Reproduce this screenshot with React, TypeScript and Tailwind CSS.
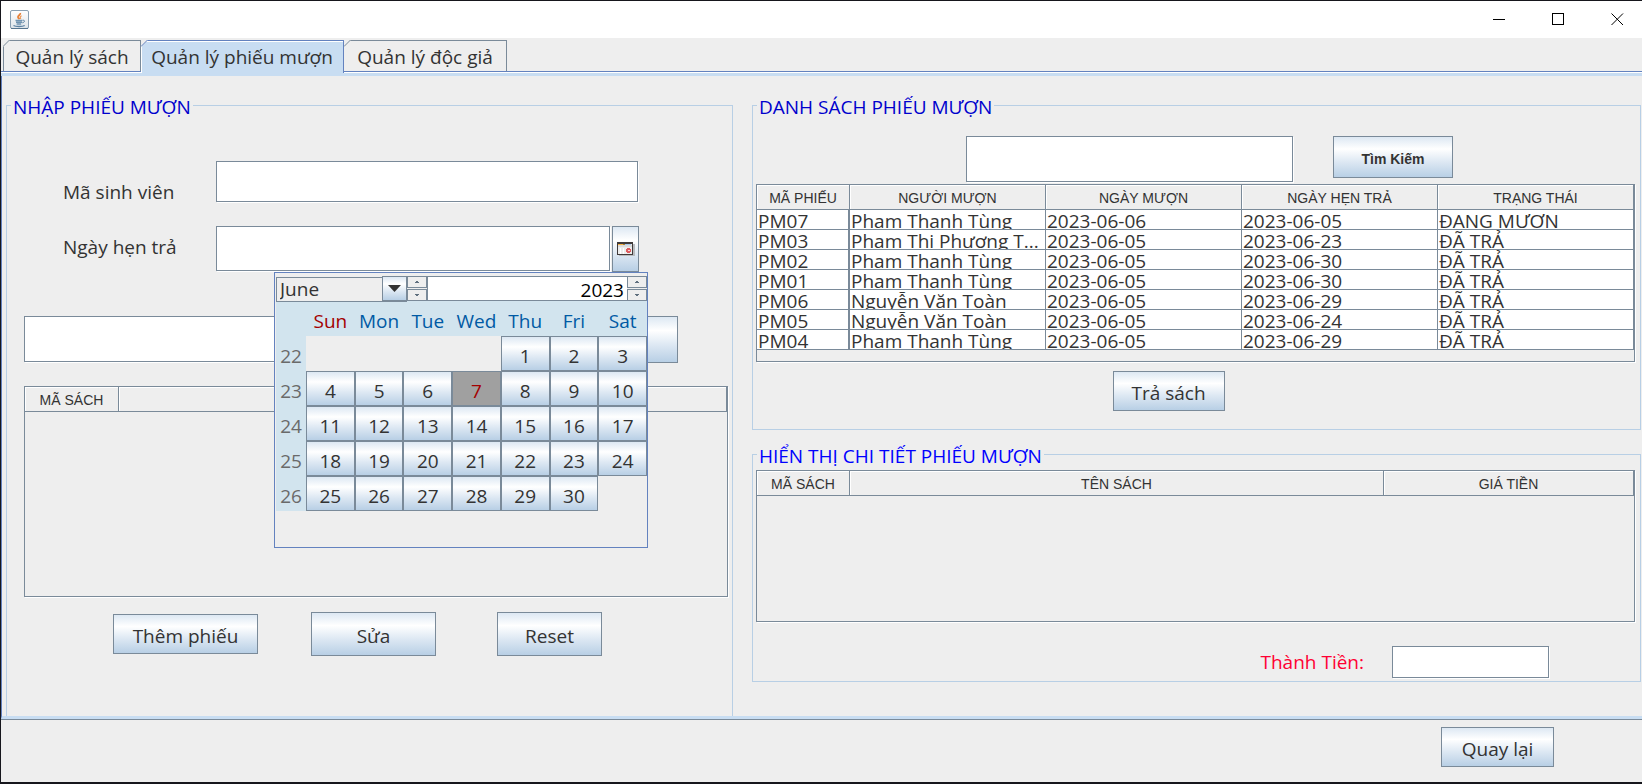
import { useState } from "react";

type Phieu = {
  id: string;
  nguoiMuon: string;
  ngayMuon: string;
  ngayHenTra: string;
  trangThai: string;
};

const tabs = [
  { name: "Quản lý sách", width: "w-[138px]" },
  { name: "Quản lý phiếu mượn", width: "w-[203px]" },
  { name: "Quản lý độc giả", width: "w-[163px]" },
];

const dsPhieu: Phieu[] = [
  { id: "PM07", nguoiMuon: "Phạm Thanh Tùng", ngayMuon: "2023-06-06", ngayHenTra: "2023-06-05", trangThai: "ĐANG MƯỢN" },
  { id: "PM03", nguoiMuon: "Phạm Thị Phương T...", ngayMuon: "2023-06-05", ngayHenTra: "2023-06-23", trangThai: "ĐÃ TRẢ" },
  { id: "PM02", nguoiMuon: "Phạm Thanh Tùng", ngayMuon: "2023-06-05", ngayHenTra: "2023-06-30", trangThai: "ĐÃ TRẢ" },
  { id: "PM01", nguoiMuon: "Phạm Thanh Tùng", ngayMuon: "2023-06-05", ngayHenTra: "2023-06-30", trangThai: "ĐÃ TRẢ" },
  { id: "PM06", nguoiMuon: "Nguyễn Văn Toàn", ngayMuon: "2023-06-05", ngayHenTra: "2023-06-29", trangThai: "ĐÃ TRẢ" },
  { id: "PM05", nguoiMuon: "Nguyễn Văn Toàn", ngayMuon: "2023-06-05", ngayHenTra: "2023-06-24", trangThai: "ĐÃ TRẢ" },
  { id: "PM04", nguoiMuon: "Phạm Thanh Tùng", ngayMuon: "2023-06-05", ngayHenTra: "2023-06-29", trangThai: "ĐÃ TRẢ" },
];

const months = [
  "January", "February", "March", "April", "May", "June",
  "July", "August", "September", "October", "November", "December",
];

const weekDays = ["Sun", "Mon", "Tue", "Wed", "Thu", "Fri", "Sat"];

// 0 = empty cell
const weeks = [
  { no: 22, days: [0, 0, 0, 0, 1, 2, 3] },
  { no: 23, days: [4, 5, 6, 7, 8, 9, 10] },
  { no: 24, days: [11, 12, 13, 14, 15, 16, 17] },
  { no: 25, days: [18, 19, 20, 21, 22, 23, 24] },
  { no: 26, days: [25, 26, 27, 28, 29, 30, 0] },
];

const gradient =
  "bg-[linear-gradient(180deg,#dde8f3_0%,#ffffff_30%,#dde8f3_62%,#b8cfe5_100%)]";
const btn = `border border-[#7a8a99] ${gradient}`;
const field =
  "min-w-0 border border-[#7a8a99] bg-white px-1 outline-none shadow-[1px_1px_0_#ffffff]";
const group = "min-w-0 border border-[#b8cfe5]";
const legend = "ml-1 px-[2px] pt-1 leading-[22px]";
const tableBox = "border border-[#7a8a99] shadow-[1px_1px_0_#ffffff]";
const table = "w-full table-fixed border-separate border-spacing-0";
const th =
  "h-[25px] border-r border-b border-[#7a8a99] p-0 pt-[2px] font-['Liberation_Sans',sans-serif] text-sm leading-5 font-normal shadow-[inset_1px_1px_0_#ffffff]";
const td = "border-r border-b border-[#7a8a99] bg-white p-0";

function JavaIcon() {
  return (
    <svg width="20" height="20" viewBox="0 0 20 20" fill="none">
      <defs>
        <linearGradient id="jbg" x1="0" y1="0" x2="0" y2="1">
          <stop offset="0" stopColor="#ffffff" />
          <stop offset="1" stopColor="#dde3e8" />
        </linearGradient>
      </defs>
      <rect x="1.500" y="0.500" width="18" height="18" rx="1.500" fill="url(#jbg)" stroke="#8aa0b2" />
      <path d="M2 18.500h17" stroke="#55748e" />
      <path d="M11.300 3c.6 1.800-2.800 2.600-2.300 4.300.2.800 1.100 1.100 1.300 1.900" stroke="#e8833a" strokeWidth="1.800" />
      <path d="M12.600 5.800c-1.600.8-1.700 1.600-.8 3.200" stroke="#ec9a5b" strokeWidth="1.200" />
      <path d="M6.500 10.500h6.800M7 12.300h6M7.600 14h4.600" stroke="#6f93b0" strokeWidth="1.400" />
      <path d="M13.600 10.300c2.800-.6 2.300 2.200-.3 2.500" stroke="#5b82a3" />
      <path d="M4.500 15.500c2 1.300 9 1.300 11.200 0" stroke="#5b82a3" strokeWidth="1.400" />
    </svg>
  );
}

function CalendarIcon() {
  return (
    <svg width="18" height="14" viewBox="0 0 18 14" shapeRendering="crispEdges">
      <rect x="2" y="2" width="16" height="12" fill="#b9bcbf" />
      <rect x="0" y="0" width="16" height="13" fill="#3f3a3a" />
      <rect x="1" y="2" width="14" height="10" fill="#ececec" />
      <rect x="1" y="2" width="5" height="1" fill="#f5b041" />
      <rect x="6" y="2" width="2" height="1" fill="#a97f35" />
      <rect x="8" y="2" width="6" height="1" fill="#a9cbee" />
      <rect x="1" y="3" width="14" height="2" fill="#dcdcdc" />
      <path d="M3.500 6v6M6.500 6v6" stroke="#ffffff" strokeWidth="1" />
      <path d="M10 6h3v1h1v3h-1v1h-3v-1H9V7h1z" fill="#de5b5f" />
      <rect x="11" y="8" width="2" height="1" fill="#f8d5d5" />
    </svg>
  );
}

/** small up / down buttons next to month and year */
function Spinner({ name }: { name: string }) {
  return (
    <div className="flex w-5 shrink-0 flex-col gap-px">
      <button aria-label={`${name} up`} className="flex flex-1 items-center justify-center border border-[#7a8a99]">
        <svg width="4" height="2" viewBox="0 0 4 2" fill="#5f6f7e" shapeRendering="crispEdges">
          <path d="M1 0h2v1h1v1H0V1h1z" />
        </svg>
      </button>
      <button aria-label={`${name} down`} className="flex flex-1 items-center justify-center border border-[#7a8a99]">
        <svg width="4" height="2" viewBox="0 0 4 2" fill="#5f6f7e" shapeRendering="crispEdges">
          <path d="M0 0h4v1H3v1H1V1H0z" />
        </svg>
      </button>
    </div>
  );
}

function DatePopup() {
  const [month, setMonth] = useState("June");
  const [day, setDay] = useState(7);

  return (
    <div className="absolute top-full left-[58px] z-10 h-[276px] w-[374px] border border-[#6382bf] bg-[#eeeeee] pt-[3px] pl-px">
      <div className="flex h-[25px] bg-[#eeeeee]">
        <div className="relative w-[131px] shrink-0">
          <select
            aria-label="Month"
            value={month}
            onChange={(e) => setMonth(e.target.value)}
            className="h-full w-full appearance-none border border-[#7a8a99] bg-[#eeeeee] pl-[3px] leading-[22px] outline-none"
          >
            {months.map((m) => (
              <option key={m}>{m}</option>
            ))}
          </select>
          <span className={`pointer-events-none absolute top-0 right-0 flex h-full w-[25px] items-center justify-center ${btn}`}>
            <svg width="13" height="7" viewBox="0 0 13 7" fill="#333333">
              <path d="M0 0h13L6.500 7z" />
            </svg>
          </span>
        </div>
        <Spinner name="Month" />
        <input
          aria-label="Year"
          defaultValue="2023"
          className="min-w-0 flex-1 border border-r-0 border-[#7a8a99] bg-white pt-[2px] pr-[3px] text-right leading-[20px] text-black outline-none"
        />
        <Spinner name="Year" />
      </div>

      <div className="grid grid-cols-[30px_repeat(7,minmax(0,1fr))]">
        <div className="h-[35px] bg-[#d2e4ee]" />
        {weekDays.map((d) => (
          <div
            key={d}
            className={`flex h-[35px] items-center justify-center bg-[#d2e4ee] pt-1 ${
              d === "Sun" ? "text-[#a40000]" : "text-[#005aa4]"
            }`}
          >
            {d}
          </div>
        ))}
        {weeks.map((w) => (
          <div key={w.no} className="contents">
            <div className="flex h-[35px] items-center justify-center bg-[#d2e4ee] pt-1 text-[#6a6a6a]">
              {w.no}
            </div>
            {w.days.map((d, i) =>
              d === 0 ? (
                <div key={i} />
              ) : (
                <button
                  key={i}
                  onClick={() => setDay(d)}
                  className={`h-[35px] border border-[#7a8a99] pt-1 ${
                    d === day ? "bg-[#a0a0a0]" : gradient
                  } ${d === 7 ? "text-[#a40000]" : ""}`}
                >
                  {d}
                </button>
              )
            )}
          </div>
        ))}
      </div>
    </div>
  );
}

function NhapPhieu() {
  return (
    <fieldset className={`${group} border-b-0`}>
      <legend className={`${legend} text-[#0000cd]`}>NHẬP PHIẾU MƯỢN</legend>

      <div className="mt-[43px] flex items-start pr-[94px] pl-14">
        <label htmlFor="maSV" className="w-[153px] shrink-0 pt-[18px]">
          Mã sinh viên
        </label>
        <input id="maSV" className={`${field} h-[41px] flex-1`} />
      </div>

      <div className="mt-[21px] flex items-start pr-[93px] pl-14">
        <label htmlFor="ngayHen" className="w-[153px] shrink-0 pt-2">
          Ngày hẹn trả
        </label>
        <div className="relative flex min-w-0 flex-1 gap-[2px]">
          <input id="ngayHen" className={`${field} h-[45px] flex-1`} />
          <button aria-label="Chọn ngày" className={`${btn} flex h-[46px] w-[27px] shrink-0 items-center justify-center`}>
            <CalendarIcon />
          </button>
          <DatePopup />
        </div>
      </div>

      <div className="mt-11 flex pr-[54px] pl-[17px]">
        <input aria-label="Mã sách" className={`${field} h-[46px] flex-1`} />
        <button aria-label="Thêm sách" className={`${btn} ml-10 h-[47px] w-[100px]`} />
      </div>

      <div className={`${tableBox} mt-[23px] mr-1 ml-[17px] h-[211px]`}>
        <table className={table}>
          <thead>
            <tr>
              <th className={`${th} w-[94px]`}>MÃ SÁCH</th>
              <td className={th} />
            </tr>
          </thead>
        </table>
      </div>

      <div className="mt-[15px] flex items-center pl-[106px]">
        <button className={`${btn} h-10 w-[145px] pt-1`}>Thêm phiếu</button>
        <button className={`${btn} ml-[53px] h-11 w-[125px] pt-1`}>Sửa</button>
        <button className={`${btn} ml-[61px] h-11 w-[105px] pt-1`}>Reset</button>
      </div>
    </fieldset>
  );
}

function DanhSachPhieu() {
  return (
    <fieldset className={group}>
      <legend className={`${legend} text-[#0000cd]`}>DANH SÁCH PHIẾU MƯỢN</legend>

      <div className="mt-[18px] flex items-start gap-10 pr-[187px] pl-[213px]">
        <input aria-label="Tìm phiếu" className={`${field} h-[46px] flex-1`} />
        <button className={`${btn} h-[42px] w-[120px] pt-1 font-['Liberation_Sans',sans-serif] text-sm font-bold`}>
          Tìm Kiếm
        </button>
      </div>

      <div className={`${tableBox} mt-[2px] mr-[5px] ml-[3px] pb-[11px]`}>
        <table className={table}>
          <thead>
            <tr>
              <th className={`${th} w-[93px]`}>MÃ PHIẾU</th>
              <th className={th}>NGƯỜI MƯỢN</th>
              <th className={th}>NGÀY MƯỢN</th>
              <th className={th}>NGÀY HẸN TRẢ</th>
              <th className={th}>TRẠNG THÁI</th>
            </tr>
          </thead>
          <tbody>
            {dsPhieu.map((p) => (
              <tr key={p.id}>
                {[p.id, p.nguoiMuon, p.ngayMuon, p.ngayHenTra, p.trangThai].map((v, i) => (
                  <td key={i} className={`${td} ${i === 0 ? "border-r-2" : ""}`}>
                    <div className="h-[19px] overflow-hidden pl-px leading-[22px] whitespace-nowrap">{v}</div>
                  </td>
                ))}
              </tr>
            ))}
          </tbody>
        </table>
      </div>

      <div className="mt-[9px] mb-[18px] flex justify-center pr-14">
        <button className={`${btn} h-10 w-[112px] pt-1`}>Trả sách</button>
      </div>
    </fieldset>
  );
}

function ChiTietPhieu() {
  return (
    <fieldset className={group}>
      <legend className={`${legend} text-[#0000ff]`}>HIỂN THỊ CHI TIẾT PHIẾU MƯỢN</legend>

      <div className={`${tableBox} mt-[3px] mr-[5px] ml-[3px] h-[152px]`}>
        <table className={table}>
          <thead>
            <tr>
              <th className={`${th} w-[93px]`}>MÃ SÁCH</th>
              <th className={th}>TÊN SÁCH</th>
              <th className={`${th} w-[250px]`}>GIÁ TIỀN</th>
            </tr>
          </thead>
        </table>
      </div>

      <div className="mt-6 mb-[3px] flex items-center justify-end gap-7 pr-[91px]">
        <label htmlFor="thanhTien" className="text-[#ff0033]">
          Thành Tiền:
        </label>
        <input id="thanhTien" className={`${field} h-8 w-[157px]`} />
      </div>
    </fieldset>
  );
}

export default function App() {
  const [tab, setTab] = useState(1);

  return (
    <div className="flex min-h-screen flex-col border-t border-b-2 border-l border-[#16161c] bg-[#eeeeee] font-['Open_Sans','Noto_Sans',sans-serif] text-[19px] leading-[26px] text-[#333333]">
      {/* title bar */}
      <header className="flex h-[37px] shrink-0 items-center justify-between bg-white pr-[18px] pl-2">
        <JavaIcon />
        <div className="flex gap-[46px]">
          <button aria-label="Minimize">
            <svg width="13" height="13" viewBox="0 0 13 13" stroke="#000000" shapeRendering="crispEdges">
              <path d="M0 6.500h12" />
            </svg>
          </button>
          <button aria-label="Maximize">
            <svg width="13" height="13" viewBox="0 0 13 13" fill="none" stroke="#000000" shapeRendering="crispEdges">
              <rect x="0.500" y="0.500" width="11" height="11" />
            </svg>
          </button>
          <button aria-label="Close">
            <svg width="13" height="13" viewBox="0 0 13 13" stroke="#000000">
              <path d="M0.500 0.500l11.500 11.500M12 0.500L0.500 12" />
            </svg>
          </button>
        </div>
      </header>

      <nav className="flex h-[34px] shrink-0 border-b border-[#6382bf] pt-[2px] pl-[2px]">
        {tabs.map((t, i) => (
          <button
            key={t.name}
            onClick={() => setTab(i)}
            className={`relative border-t border-r pt-[2px] ${t.width} ${
              i === tab
                ? "-mb-[2px] border-[#6382bf] bg-[#c8ddf2] pb-[2px] shadow-[inset_1px_1px_0_#ffffff]"
                : "border-[#7a8a99]"
            } ${i === 0 ? "border-l" : ""}`}
          >
            {/* cut corner */}
            <svg
              className={`absolute -top-px ${i === 0 ? "-left-px" : "left-0"}`}
              width="7"
              height="7"
              viewBox="0 0 7 7"
            >
              <path d="M0 0h7L0 7z" fill="#eeeeee" />
              <path d="M0 6.500L6.500 0" stroke={i === tab ? "#6382bf" : "#7a8a99"} />
            </svg>
            {t.name}
          </button>
        ))}
      </nav>
      <div className="h-1 shrink-0 border-t border-white bg-[#c8ddf2]" />

      <main className="grid flex-1 grid-cols-[minmax(0,727fr)_minmax(0,889fr)] gap-[19px] border-b-[3px] border-l border-b-[#c8ddf2] border-l-[#6382bf] pt-4 pr-px pl-1">
        <NhapPhieu />
        <div className="flex min-w-0 flex-col gap-[11px]">
          <DanhSachPhieu />
          <ChiTietPhieu />
        </div>
      </main>

      <footer className="flex h-[63px] shrink-0 justify-end border-t border-[#7a8a99] pt-[7px] pr-[88px]">
        <button className={`${btn} h-10 w-[113px] pt-1`}>Quay lại</button>
      </footer>
    </div>
  );
}
